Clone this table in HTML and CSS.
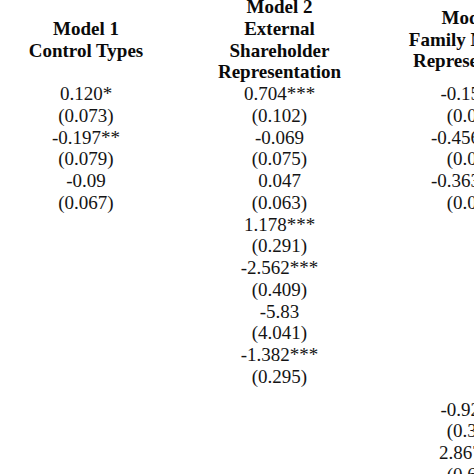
FILE: index.html
```html
<!DOCTYPE html>
<html>
<head>
<meta charset="utf-8">
<link rel="stylesheet" href="styles.css">
</head>
<body>
<div class="table">
  <div class="col c1">
    <div class="head">
      <div>Model 1</div>
      <div>Control Types</div>
    </div>
    <div class="cells">
      <div>0.120*</div>
      <div>(0.073)</div>
      <div>-0.197**</div>
      <div>(0.079)</div>
      <div>-0.09</div>
      <div>(0.067)</div>
    </div>
  </div>
  <div class="col c2">
    <div class="head">
      <div>Model 2</div>
      <div>External</div>
      <div>Shareholder</div>
      <div>Representation</div>
    </div>
    <div class="cells">
      <div>0.704***</div>
      <div>(0.102)</div>
      <div>-0.069</div>
      <div>(0.075)</div>
      <div>0.047</div>
      <div>(0.063)</div>
      <div>1.178***</div>
      <div>(0.291)</div>
      <div>-2.562***</div>
      <div>(0.409)</div>
      <div>-5.83</div>
      <div>(4.041)</div>
      <div>-1.382***</div>
      <div>(0.295)</div>
    </div>
  </div>
  <div class="col c3">
    <div class="head">
      <div>Model 3</div>
      <div>Family Member</div>
      <div>Representation</div>
    </div>
    <div class="cells">
      <div>-0.158**</div>
      <div>(0.071)</div>
      <div>-0.4567***</div>
      <div>(0.082)</div>
      <div>-0.3634***</div>
      <div>(0.069)</div>
    </div>
    <div class="cells late">
      <div>-0.923**</div>
      <div>(0.382)</div>
      <div>2.867***</div>
      <div>(0.614)</div>
    </div>
  </div>
</div>
</body>
</html>
```

FILE: styles.css
```css
html, body {
  margin: 0;
  padding: 0;
  background: #ffffff;
  overflow: hidden;
}

body {
  width: 474px;
  height: 474px;
}

.table {
  display: flex;
  margin-top: -4px;
  font-family: "Liberation Serif", "Times New Roman", serif;
  font-size: 19px;
  line-height: 21.75px;
  color: #141414;
}

.col {
  flex: none;
  display: flex;
  flex-direction: column;
  text-align: center;
  white-space: nowrap;
}

.c1 { width: 172px; }
.c2 { width: 215px; }
.c3 { width: 175px; }

.head {
  height: 87px;
  display: flex;
  flex-direction: column;
  justify-content: center;
  font-weight: bold;
  color: #0a0a0a;
}

.cells.late {
  margin-top: 185px;
}
```
